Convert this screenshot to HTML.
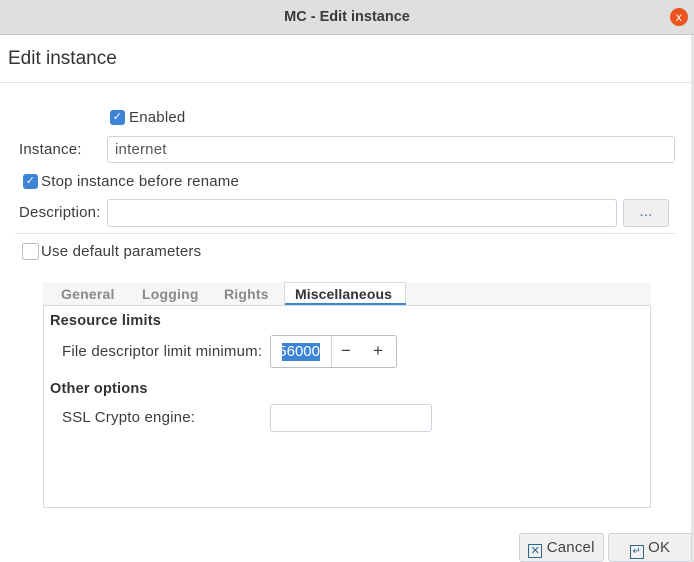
<!DOCTYPE html>
<html><head><style>
body{margin:0;width:694px;height:562px;overflow:hidden;background:#fff;font-family:"Liberation Sans",sans-serif;font-size:15px;letter-spacing:0.2px;color:#3c3c3c;position:relative}
.a{position:absolute;white-space:nowrap}
.title{left:0;top:0;width:694px;height:34px;background:#dfdfdf;border-bottom:1px solid #c8c8c8;text-align:center;line-height:34px;font-weight:bold;font-size:14.5px;letter-spacing:0;color:#3a3a3a}
.close{left:670px;top:8px;width:18px;height:18px;border-radius:50%;background:#e9541f;color:#fff;font-size:12px;line-height:18px;text-align:center}
.rb{left:691px;top:35px;width:3px;height:527px;background:#e6e6e6}
.cb{width:15px;height:15px;border-radius:3px;background:#3d83d6;color:#fff;font-size:11px;line-height:15px;text-align:center}
.cbo{width:15px;height:15px;border-radius:3px;border:1px solid #b8b8b8;background:#fff}
.inp{border:1px solid #cdd3de;border-radius:3px;background:#fff;box-sizing:border-box}
.btn{border:1px solid #cfd3db;border-radius:3px;background:#f1f0ee;box-sizing:border-box;text-align:center}
</style></head><body>
<div class="a title">MC - Edit instance</div>
<div class="a close">x</div>
<div class="a rb"></div>
<div class="a" style="left:8px;top:48px;font-size:19px;letter-spacing:0;color:#333">Edit instance</div>
<div class="a" style="left:0;top:82px;width:691px;height:1px;background:#e2e2e2"></div>

<div class="a cb" style="left:110px;top:110px">✓</div>
<div class="a" style="left:129px;top:109px">Enabled</div>
<div class="a" style="left:19px;top:141px">Instance:</div>
<div class="a inp" style="left:107px;top:136px;width:568px;height:27px;padding:4px 7px;color:#555">internet</div>
<div class="a cb" style="left:23px;top:174px">✓</div>
<div class="a" style="left:41px;top:173px">Stop instance before rename</div>
<div class="a" style="left:19px;top:204px">Description:</div>
<div class="a inp" style="left:107px;top:199px;width:510px;height:28px"></div>
<div class="a btn" style="left:623px;top:199px;width:46px;height:28px;line-height:24px;color:#4a6fa5">...</div>
<div class="a" style="left:15px;top:233px;width:660px;height:1px;background:#e2e2e2"></div>
<div class="a cbo" style="left:22px;top:243px"></div>
<div class="a" style="left:41px;top:243px">Use default parameters</div>

<div class="a" style="left:43px;top:282px;width:608px;height:23px;background:#f5f6f7"></div>
<div class="a" style="left:61px;top:286px;color:#8a8a8a;font-weight:bold;font-size:14px">General</div>
<div class="a" style="left:142px;top:286px;color:#8a8a8a;font-weight:bold;font-size:14px">Logging</div>
<div class="a" style="left:224px;top:286px;color:#8a8a8a;font-weight:bold;font-size:14px">Rights</div>
<div class="a" style="left:284px;top:282px;width:122px;height:23px;background:#fff;border:1px solid #dadada;border-bottom:none;box-sizing:border-box"></div>
<div class="a" style="left:295px;top:286px;font-weight:bold;color:#333;font-size:14px;letter-spacing:0.1px">Miscellaneous</div>
<div class="a" style="left:285px;top:303px;width:121px;height:2px;background:#3d83d6"></div>
<div class="a" style="left:43px;top:305px;width:608px;height:203px;border:1px solid #dadada;box-sizing:border-box"></div>
<div class="a" style="left:50px;top:313px;font-weight:bold;color:#333;font-size:14.5px">Resource limits</div>
<div class="a" style="left:62px;top:343px">File descriptor limit minimum:</div>
<div class="a inp" style="left:270px;top:335px;width:127px;height:33px;border-color:#b9bfc9"></div>
<div class="a" style="left:331px;top:336px;width:1px;height:31px;background:#d5d5d5"></div>
<div class="a" style="left:282px;top:343px;background:#3d83d6;color:#fff;line-height:18px;width:38px;overflow:hidden;direction:rtl;letter-spacing:0">56000</div>
<div class="a" style="left:341px;top:341px;font-size:17px">−</div>
<div class="a" style="left:373px;top:341px;font-size:17px">+</div>
<div class="a" style="left:50px;top:381px;font-weight:bold;color:#333;font-size:14.5px">Other options</div>
<div class="a" style="left:62px;top:409px">SSL Crypto engine:</div>
<div class="a inp" style="left:270px;top:404px;width:162px;height:28px"></div>

<div class="a btn" style="left:519px;top:533px;width:85px;height:29px;line-height:27px;color:#444"><span style="display:inline-block;width:12px;height:12px;border:1.5px solid #2b6a8a;font-size:11px;line-height:12px;color:#2b6a8a;vertical-align:-2px">✕</span> Cancel</div>
<div class="a btn" style="left:608px;top:533px;width:84px;height:29px;line-height:27px;color:#444"><span style="display:inline-block;width:12px;height:12px;border:1.5px solid #2b6a8a;font-size:10px;line-height:12px;color:#2b6a8a;vertical-align:-2px">↵</span> OK</div>
</body></html>
